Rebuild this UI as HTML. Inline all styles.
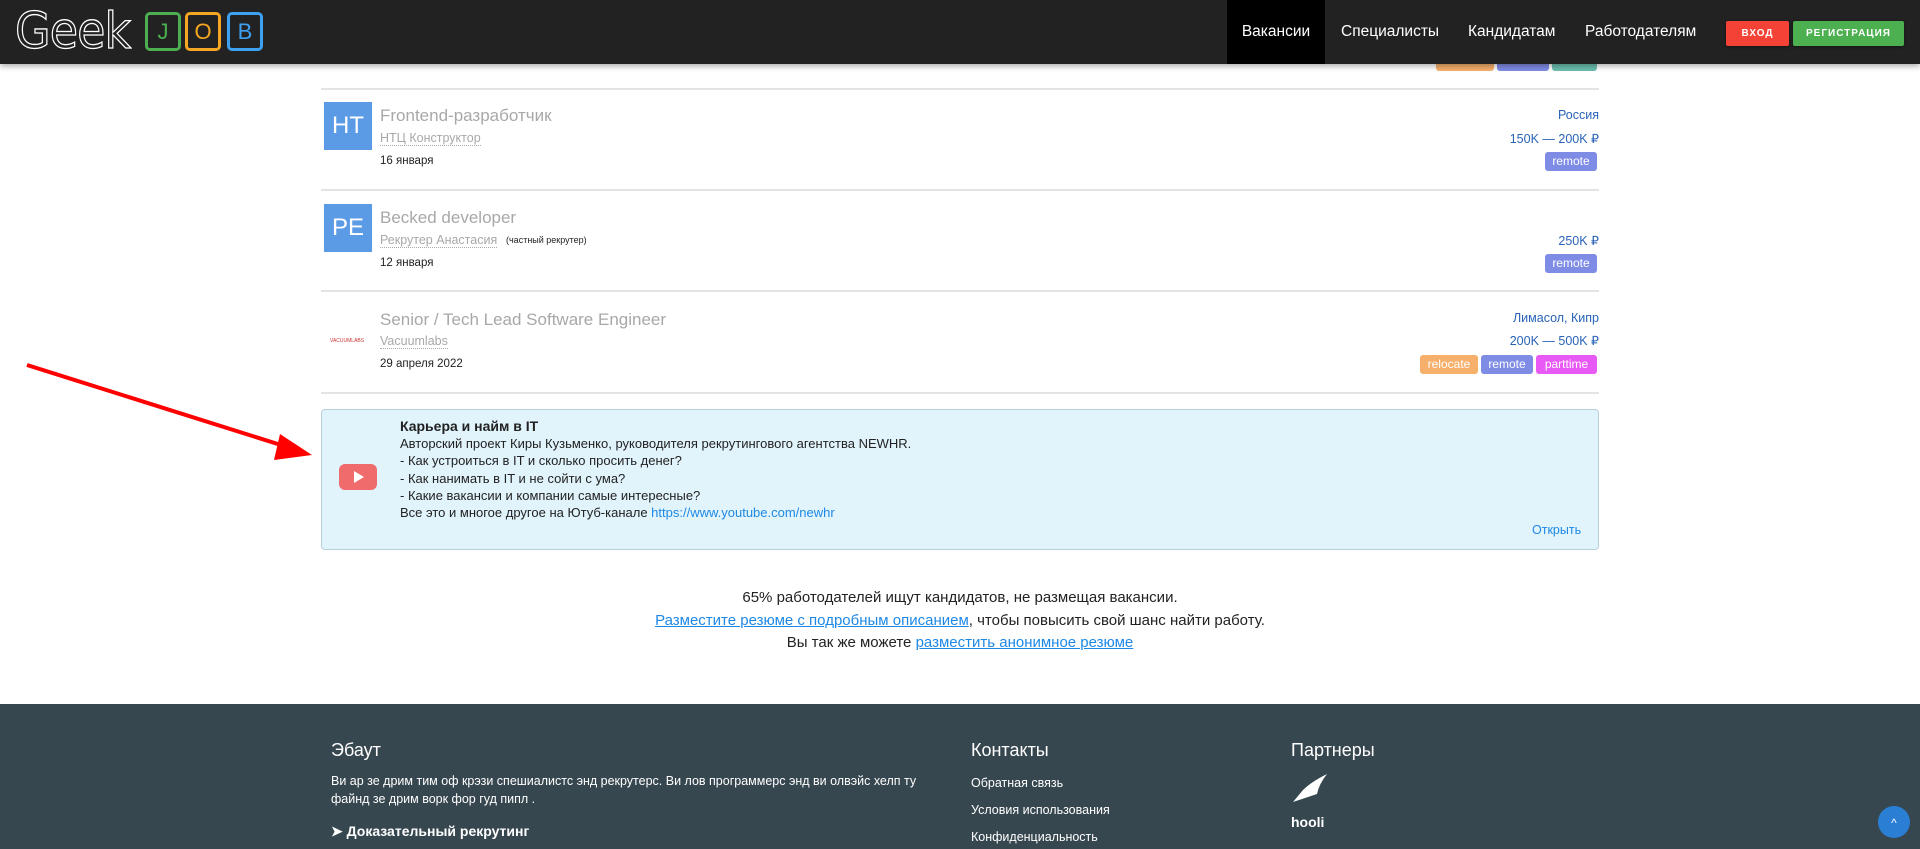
<!DOCTYPE html>
<html><head><meta charset="utf-8"><style>
*{margin:0;padding:0;box-sizing:border-box}
body{width:1920px;height:849px;overflow:hidden;background:#fff;font-family:"Liberation Sans",sans-serif;position:relative;color:#222}
.a{position:absolute;white-space:nowrap}
.hdr{position:absolute;left:0;top:0;width:1920px;height:64px;background:#222;box-shadow:0 2px 6px rgba(0,0,0,.35);z-index:5}
.nav{position:absolute;top:0;height:64px;line-height:64px;color:#fff;font-size:15.5px;white-space:nowrap}
.btn{position:absolute;top:21px;height:25px;line-height:25px;color:#fff;font-size:10px;font-weight:bold;letter-spacing:1px;text-align:center;border-radius:2px;box-shadow:0 1px 3px rgba(0,0,0,.4)}
.line{position:absolute;left:321px;width:1278px;height:2px;background:#e3e3e3}
.av{position:absolute;width:48px;height:48px;background:#5b9be6;color:#fff;font-size:24px;line-height:48px;text-align:center}
.tt{position:absolute;font-size:17px;color:#a8a8a8;white-space:nowrap}
.co{position:absolute;font-size:12.5px;color:#a8a8a8;border-bottom:1px dotted #aaa;line-height:14px;white-space:nowrap}
.dt{position:absolute;font-size:11.5px;color:#222;white-space:nowrap}
.r{position:absolute;right:321px;font-size:12.5px;color:#2a63b8;white-space:nowrap}
.tag{position:absolute;height:19px;line-height:19px;font-size:12px;color:#fff;border-radius:3px;text-align:center;overflow:hidden}
.f{color:#fff}
.box{position:absolute;top:12px;width:36px;height:39px;border:3px solid;border-radius:5px;font-size:22px;line-height:33px;text-align:center}
</style></head><body>
<div class="hdr">
 <div class="a" style="left:15px;top:5px;font-size:50px;line-height:52px;color:#222;-webkit-text-stroke:1.3px #fff;font-family:'DejaVu Sans',sans-serif;letter-spacing:-1px;transform:scaleX(.92);transform-origin:left">Geek</div>
 <div class="box" style="left:145px;border-color:#4caf50;color:#4caf50">J</div>
 <div class="box" style="left:185px;border-color:#f5a623;color:#f5a623">O</div>
 <div class="box" style="left:227px;border-color:#3ea0f0;color:#3ea0f0">B</div>
 <div class="nav" style="left:1227px;width:98px;background:#000;text-align:center">Вакансии</div>
 <div class="nav" style="left:1341px">Специалисты</div>
 <div class="nav" style="left:1468px">Кандидатам</div>
 <div class="nav" style="left:1585px">Работодателям</div>
 <div class="btn" style="left:1726px;width:63px;background:#f44336">ВХОД</div>
 <div class="btn" style="left:1793px;width:111px;background:#4caf50">РЕГИСТРАЦИЯ</div>
</div>
<div class="tag" style="left:1436px;top:52px;width:58px;background:#f6b06b"></div>
<div class="tag" style="left:1497px;top:52px;width:52px;background:#7f8ce6"></div>
<div class="tag" style="left:1552px;top:52px;width:45px;background:#6cbfb0"></div>
<div class="line" style="top:88px"></div>
<div class="line" style="top:189px"></div>
<div class="line" style="top:290px"></div>
<div class="line" style="top:392px"></div>

<div class="av" style="left:324px;top:102px">HT</div>
<div class="tt" style="left:380px;top:106px">Frontend-разработчик</div>
<div class="co" style="left:380px;top:131px">НТЦ Конструктор</div>
<div class="dt" style="left:380px;top:155px">16 января</div>
<div class="r" style="top:108px">Россия</div>
<div class="r" style="top:131px">150K — 200K ₽</div>
<div class="tag" style="left:1545px;top:152px;width:52px;background:#7f8ce6">remote</div>

<div class="av" style="left:324px;top:204px">PE</div>
<div class="tt" style="left:380px;top:208px">Becked developer</div>
<div class="co" style="left:380px;top:233px">Рекрутер Анастасия</div>
<div class="dt" style="left:506px;top:235px;font-size:9px">(частный рекрутер)</div>
<div class="dt" style="left:380px;top:257px">12 января</div>
<div class="r" style="top:233px">250K ₽</div>
<div class="tag" style="left:1545px;top:254px;width:52px;background:#7f8ce6">remote</div>

<div class="a" style="left:330px;top:338px;font-size:5px;color:#c33">VACUUMLABS</div>
<div class="tt" style="left:380px;top:310px">Senior / Tech Lead Software Engineer</div>
<div class="co" style="left:380px;top:334px">Vacuumlabs</div>
<div class="dt" style="left:380px;top:358px">29 апреля 2022</div>
<div class="r" style="top:311px">Лимасол, Кипр</div>
<div class="r" style="top:333px">200K — 500K ₽</div>
<div class="tag" style="left:1420px;top:355px;width:58px;background:#f6b06b">relocate</div>
<div class="tag" style="left:1481px;top:355px;width:52px;background:#7f8ce6">remote</div>
<div class="tag" style="left:1536px;top:355px;width:61px;background:#e85af5">parttime</div>

<div class="a" style="left:321px;top:409px;width:1278px;height:141px;background:#e1f4fc;border:1px solid #b5d0dc;border-radius:4px"></div>
<div class="a" style="left:339px;top:464px;width:38px;height:26px;background:#f06b6b;border-radius:6px"></div>
<div class="a" style="left:354px;top:471px;width:0;height:0;border-left:10px solid #fff;border-top:6px solid transparent;border-bottom:6px solid transparent"></div>
<div class="a" style="left:400px;top:418px;font-size:13px;line-height:17.2px;white-space:normal;width:1000px">
<b style="font-size:14px">Карьера и найм в IT</b><br>Авторский проект Киры Кузьменко, руководителя рекрутингового агентства NEWHR.<br>- Как устроиться в IT и сколько просить денег?<br>- Как нанимать в IT и не сойти с ума?<br>- Какие вакансии и компании самые интересные?<br>Все это и многое другое на Ютуб-канале <span style="color:#1e88e5">https://www.youtube.com/newhr</span></div>
<div class="a" style="left:1532px;top:523px;font-size:12.5px;color:#1e88e5">Открыть</div>

<svg class="a" style="left:0;top:0" width="400" height="480"><line x1="27" y1="365" x2="300" y2="451" stroke="#f00" stroke-width="4"/><polygon points="312,455 280,434 274,460" fill="#f00"/></svg>

<div class="a" style="left:0;width:1920px;top:587px;text-align:center;font-size:15px;line-height:22.5px">65% работодателей ищут кандидатов, не размещая вакансии.<br><u style="color:#1e88e5">Разместите резюме с подробным описанием</u>, чтобы повысить свой шанс найти работу.<br>Вы так же можете <u style="color:#1e88e5">разместить анонимное резюме</u></div>

<div class="a" style="left:0;top:704px;width:1920px;height:145px;background:#37474f"></div>
<div class="a f" style="left:331px;top:740px;font-size:18px">Эбаут</div>
<div class="a f" style="left:331px;top:772px;font-size:12.5px;line-height:18px">Ви ар зе дрим тим оф крэзи спешиалистс энд рекрутерс. Ви лов программерс энд ви олвэйс хелп ту<br>файнд зе дрим ворк фор гуд пипл .</div>
<div class="a f" style="left:331px;top:823px;font-size:14px;font-weight:bold">➤ Доказательный рекрутинг</div>
<div class="a f" style="left:971px;top:740px;font-size:18px">Контакты</div>
<div class="a f" style="left:971px;top:776px;font-size:12.5px">Обратная связь</div>
<div class="a f" style="left:971px;top:803px;font-size:12.5px">Условия использования</div>
<div class="a f" style="left:971px;top:830px;font-size:12.5px">Конфиденциальность</div>
<div class="a f" style="left:1291px;top:740px;font-size:18px">Партнеры</div>
<svg class="a" style="left:1291px;top:772px" width="40" height="32"><path d="M2 30 L12 18 Q20 10 36 2 Q28 12 26 22 L14 26 Z" fill="#fff"/></svg>
<div class="a f" style="left:1291px;top:814px;font-size:14px;font-weight:bold">hooli</div>
<div class="a" style="left:1878px;top:806px;width:32px;height:32px;border-radius:50%;background:#2a7fd4;color:#fff;text-align:center;line-height:34px;font-size:12px">^</div>
</body></html>
